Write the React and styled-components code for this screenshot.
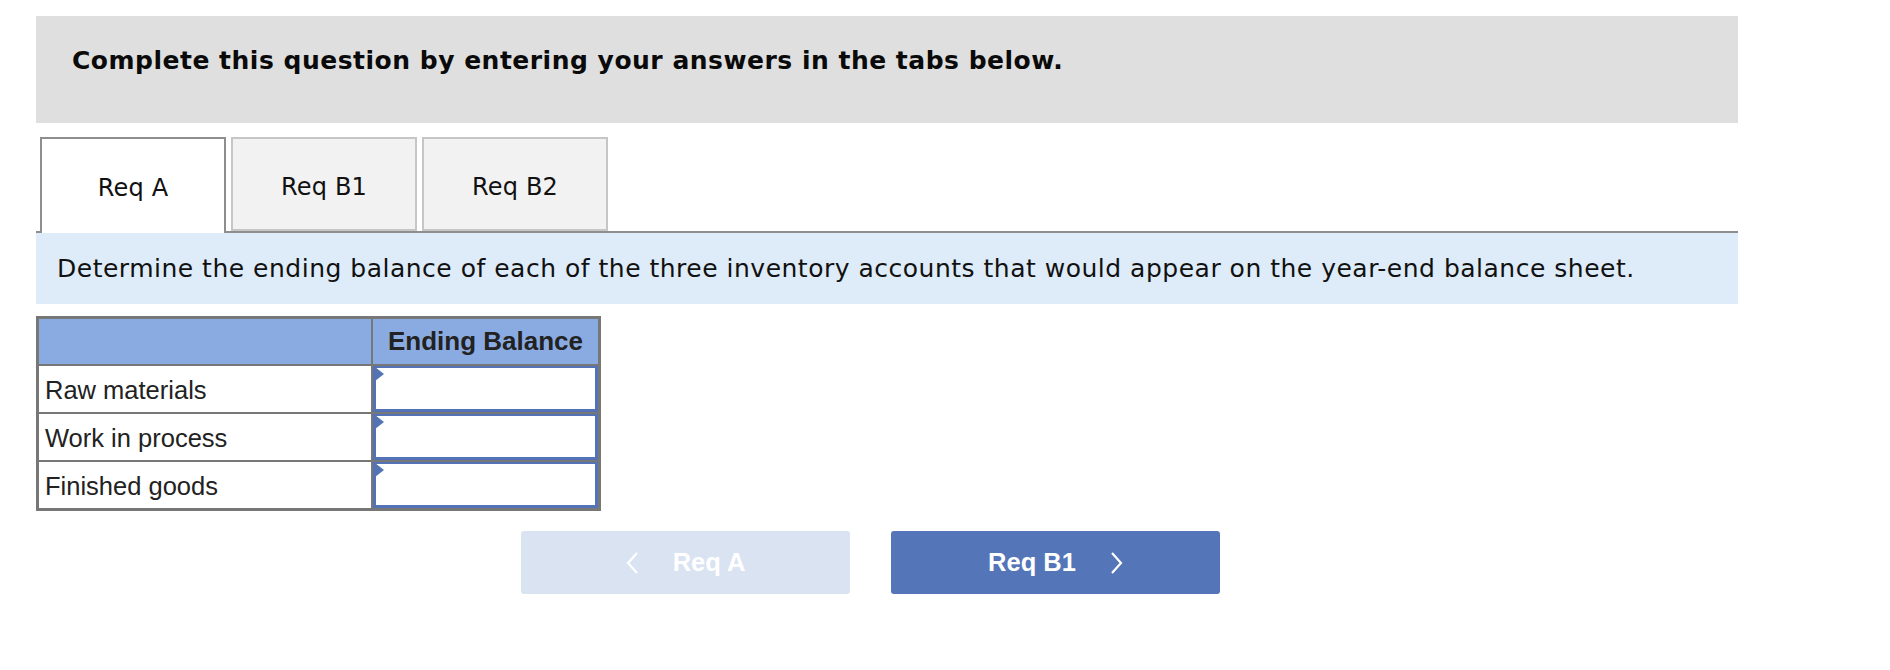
import styled, { createGlobalStyle } from 'styled-components'

const GlobalStyle = createGlobalStyle`
  html, body {
    margin: 0;
    padding: 0;
    background: #ffffff;
  }
  body {
    font-family: "DejaVu Sans", Verdana, sans-serif;
    color: #111;
  }
`

const Page = styled.div`
  width: 1702px;
  padding: 16px 0 0 36px;
`

const Instructions = styled.div`
  background: #dfdfdf;
  height: 107px;
  box-sizing: border-box;
  padding: 30px 36px 0;
  font-weight: bold;
  font-size: 25px;
  letter-spacing: 0.5px;
  line-height: 29px;
  color: #0a0a0a;
`

const TabBar = styled.div`
  display: flex;
  gap: 5px;
  margin-top: 14px;
  padding-left: 4px;
  border-bottom: 2px solid #8e8e8e;
  height: 94px;
`

const Tab = styled.div`
  width: 186px;
  box-sizing: border-box;
  display: flex;
  align-items: center;
  justify-content: center;
  font-size: 24px;
  letter-spacing: 0.2px;
  color: #111;
  background: ${(p) => (p.$active ? '#ffffff' : '#f2f2f2')};
  border: 2px solid ${(p) => (p.$active ? '#8e8e8e' : '#c6c6c6')};
  border-bottom: ${(p) => (p.$active ? 'none' : '2px solid #c6c6c6')};
  height: ${(p) => (p.$active ? '96px' : '94px')};
  padding-top: ${(p) => (p.$active ? '4px' : '5px')};
`

const Prompt = styled.div`
  background: #deebf8;
  height: 71px;
  box-sizing: border-box;
  display: flex;
  align-items: center;
  padding: 0 21px;
  font-size: 25px;
  letter-spacing: 0.5px;
  color: #111;
`

const Table = styled.table`
  margin-top: 12px;
  border-collapse: collapse;
  border: 3px solid #777;
  font-family: "Liberation Sans", Arial, sans-serif;
  font-size: 25.5px;
  color: #222;
`

const HeadCell = styled.th`
  background: #8aabe1;
  border: 2px solid #777;
  height: 45px;
  padding: 0;
  font-weight: bold;
  font-size: 26px;
  text-align: center;
  width: ${(p) => p.$w}px;
`

const LabelCell = styled.td`
  border: 2px solid #777;
  height: 44px;
  padding: 2px 0 0 6px;
  text-align: left;
`

const InputCell = styled.td`
  border: 2px solid #777;
  height: 46px;
  padding: 0;
`

const InputBox = styled.div`
  position: relative;
  height: 46px;
  box-sizing: border-box;
  border: 3px solid #5373b6;
  border-top-width: 2px;
  background: #fff;

  &::before {
    content: '';
    position: absolute;
    left: -1px;
    top: -1px;
    border-left: 9px solid #5373b6;
    border-top: 7px solid transparent;
    border-bottom: 7px solid transparent;
  }
`

const Nav = styled.div`
  display: flex;
  gap: 41px;
  margin-top: 20px;
  padding-left: 485px;
`

const NavButton = styled.button`
  width: 329px;
  height: 63px;
  border: none;
  border-radius: 3px;
  background: ${(p) => (p.$disabled ? '#d9e3f1' : '#5475b8')};
  color: #ffffff;
  font-family: "Liberation Sans", Arial, sans-serif;
  font-weight: bold;
  font-size: 25.5px;
  display: flex;
  align-items: center;
  justify-content: center;
  gap: 34px;
  padding: 0;
  cursor: pointer;
`

const Chevron = ({ dir }) => (
  <svg width="13" height="22" viewBox="0 0 13 22" fill="none">
    <polyline
      points={dir === 'left' ? '11,1 2,11 11,21' : '2,1 11,11 2,21'}
      stroke="#ffffff"
      strokeWidth="2.2"
      strokeLinejoin="miter"
    />
  </svg>
)

const rows = ['Raw materials', 'Work in process', 'Finished goods']

export default function App() {
  return (
    <>
      <GlobalStyle />
      <Page>
        <Instructions>Complete this question by entering your answers in the tabs below.</Instructions>
        <TabBar>
          <Tab $active>Req A</Tab>
          <Tab>Req B1</Tab>
          <Tab>Req B2</Tab>
        </TabBar>
        <Prompt>
          Determine the ending balance of each of the three inventory accounts that would appear on the year-end balance sheet.
        </Prompt>
        <Table>
          <thead>
            <tr>
              <HeadCell $w={332} />
              <HeadCell $w={225}>Ending Balance</HeadCell>
            </tr>
          </thead>
          <tbody>
            {rows.map((r) => (
              <tr key={r}>
                <LabelCell>{r}</LabelCell>
                <InputCell>
                  <InputBox />
                </InputCell>
              </tr>
            ))}
          </tbody>
        </Table>
        <Nav>
          <NavButton $disabled>
            <Chevron dir="left" />
            <span>Req A</span>
          </NavButton>
          <NavButton>
            <span>Req B1</span>
            <Chevron dir="right" />
          </NavButton>
        </Nav>
      </Page>
    </>
  )
}
